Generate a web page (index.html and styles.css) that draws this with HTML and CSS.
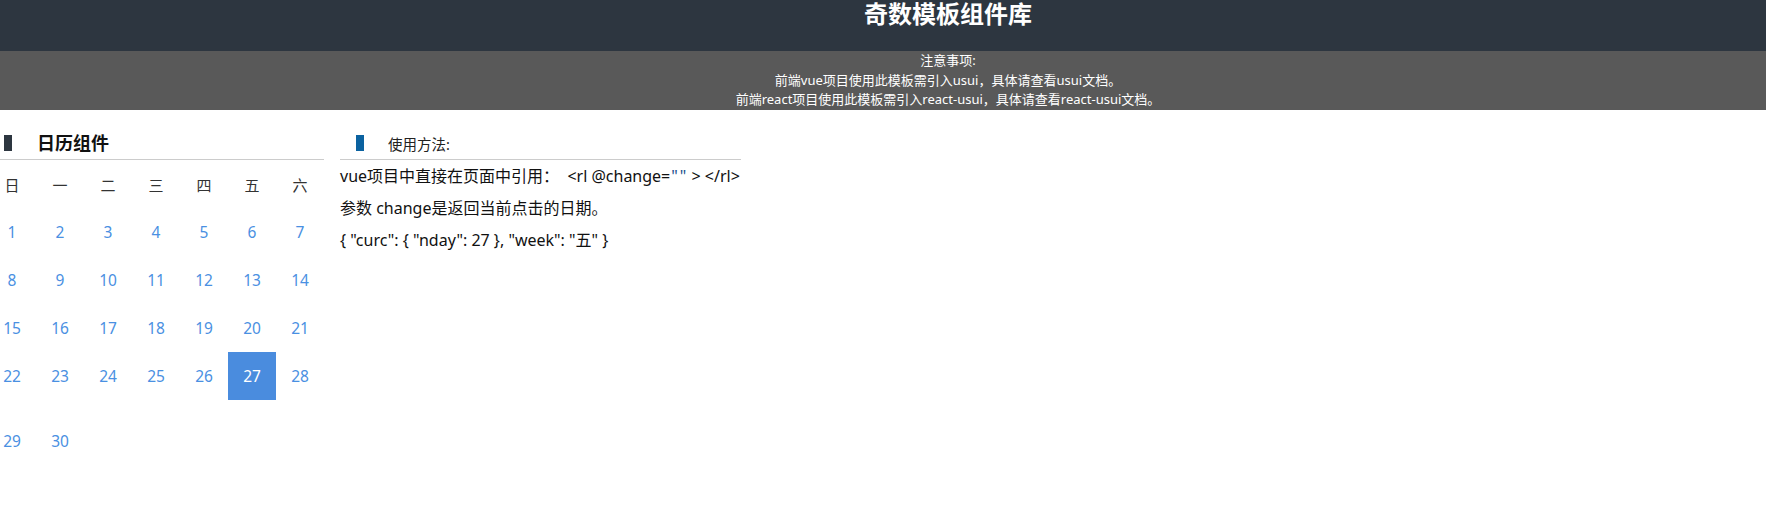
FILE: index.html
```html
<!DOCTYPE html>
<html lang="zh-CN">
<head>
<meta charset="utf-8">
<title>奇数模板组件库</title>
<link rel="stylesheet" href="styles.css">
</head>
<body>
<header class="top">
  <h1 class="title">奇数模板组件库</h1>
</header>
<section class="notice">
  <div>注意事项:</div>
  <div>前端vue项目使用此模板需引入usui，具体请查看usui文档。</div>
  <div>前端react项目使用此模板需引入react-usui，具体请查看react-usui文档。</div>
</section>
<main class="main">
  <div class="panel cal-panel">
    <div class="panel-head">
      <span class="mark mark-dark"></span>
      <span class="panel-title">日历组件</span>
    </div>
    <div class="week">
      <span>日</span><span>一</span><span>二</span><span>三</span><span>四</span><span>五</span><span>六</span>
    </div>
    <div class="days">
      <span>1</span><span>2</span><span>3</span><span>4</span><span>5</span><span>6</span><span>7</span>
      <span>8</span><span>9</span><span>10</span><span>11</span><span>12</span><span>13</span><span>14</span>
      <span>15</span><span>16</span><span>17</span><span>18</span><span>19</span><span>20</span><span>21</span>
      <span>22</span><span>23</span><span>24</span><span>25</span><span>26</span><span class="active">27</span><span>28</span>
    </div>
    <div class="days last">
      <span>29</span><span>30</span>
    </div>
  </div>
  <div class="panel doc-panel">
    <div class="panel-head">
      <span class="mark mark-blue"></span>
      <span class="doc-title">使用方法:</span>
    </div>
    <p class="line">vue项目中直接在页面中引用：&nbsp;&nbsp;<span class="code">&lt;rl @change=<span class="q">"</span><span class="q">"</span>&nbsp;&gt;&nbsp;&lt;/rl&gt;</span></p>
    <p class="line">参数 change是返回当前点击的日期。</p>
    <p class="line">{ "curc": { "nday": 27 }, "week": "五" }</p>
  </div>
</main>
</body>
</html>
```
FILE: styles.css
```css
* { box-sizing: border-box; }
body {
  margin: 0;
  font-family: "Noto Sans", "Noto Sans CJK SC", sans-serif;
  color: #222;
  background: #fff;
}
.top {
  background: #2d3640;
  height: 51px;
  padding-left: 130px;
  padding-top: 1px;
  text-align: center;
}
.title {
  margin: 0;
  font-size: 24px;
  line-height: 25px;
  font-weight: bold;
  color: #fff;
}
.notice {
  background: #595959;
  color: #fff;
  padding-left: 130px;
  text-align: center;
  font-size: 13px;
  line-height: 19.6px;
  height: 59px;
}
.main {
  display: flex;
  gap: 16px;
  align-items: flex-start;
}
.panel-head {
  height: 50px;
  display: flex;
  align-items: flex-end;
  padding-bottom: 8px;
  border-bottom: 1px solid #ccc;
}
.cal-panel { width: 324px; }
.doc-panel { width: 401px; }
.mark {
  display: inline-block;
  width: 8px;
  height: 16px;
}
.mark-dark { background: #2d3640; margin-left: 4px; }
.mark-blue { background: #0b62a0; margin-left: 16px; }
.panel-title {
  margin-left: 25px;
  font-size: 18px;
  font-weight: bold;
  line-height: 20px;
  color: #111;
  position: relative;
  top: 2px;
}
.doc-title {
  margin-left: 24px;
  font-size: 14.5px;
  line-height: 18px;
  color: #222;
  position: relative;
  top: 2px;
}
.week, .days {
  display: grid;
  grid-template-columns: repeat(7, 48px);
  grid-auto-rows: 48px;
  margin-left: -12px;
}
.week span, .days span {
  display: flex;
  align-items: center;
  justify-content: center;
}
.week span { font-size: 15px; color: #333; }
.days span { font-size: 15.5px; color: #4a90e2; }
.days span.active { background: #4a8cde; color: #fff; }
.days.last { margin-top: 17px; }
.line {
  margin: 0;
  font-size: 16px;
  line-height: 32px;
  color: #111;
  white-space: nowrap;
}
.code .q { color: #1a4f8c; padding: 0 1px; }
```
